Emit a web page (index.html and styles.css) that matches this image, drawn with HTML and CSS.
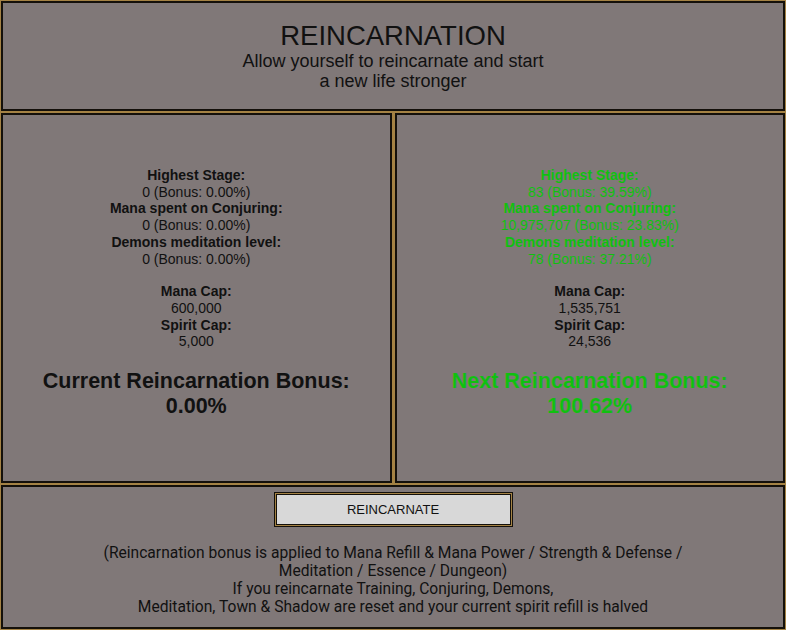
FILE: index.html
```html
<!DOCTYPE html>
<html>
<head>
<meta charset="utf-8">
<link rel="stylesheet" href="styles.css">
</head>
<body>
<div class="page">
  <section class="panel header">
    <h1 class="title">REINCARNATION</h1>
    <p class="subtitle">Allow yourself to reincarnate and start<br>a new life stronger</p>
  </section>
  <div class="row">
    <section class="panel col">
      <div class="stats">
        <div class="label">Highest Stage:</div>
        <div class="value">0 (Bonus: 0.00%)</div>
        <div class="label">Mana spent on Conjuring:</div>
        <div class="value">0 (Bonus: 0.00%)</div>
        <div class="label">Demons meditation level:</div>
        <div class="value">0 (Bonus: 0.00%)</div>
      </div>
      <div class="stats caps">
        <div class="label">Mana Cap:</div>
        <div class="value">600,000</div>
        <div class="label">Spirit Cap:</div>
        <div class="value">5,000</div>
      </div>
      <div class="bonus">Current Reincarnation Bonus:<br>0.00%</div>
    </section>
    <section class="panel col">
      <div class="stats green">
        <div class="label">Highest Stage:</div>
        <div class="value">83 (Bonus: 39.59%)</div>
        <div class="label">Mana spent on Conjuring:</div>
        <div class="value">10,975,707 (Bonus: 23.83%)</div>
        <div class="label">Demons meditation level:</div>
        <div class="value">78 (Bonus: 37.21%)</div>
      </div>
      <div class="stats caps">
        <div class="label">Mana Cap:</div>
        <div class="value">1,535,751</div>
        <div class="label">Spirit Cap:</div>
        <div class="value">24,536</div>
      </div>
      <div class="bonus green">Next Reincarnation Bonus:<br>100.62%</div>
    </section>
  </div>
  <section class="panel footer">
    <button class="btn">REINCARNATE</button>
    <p class="note">(Reincarnation bonus is applied to Mana Refill &amp; Mana Power / Strength &amp; Defense /<br>Meditation / Essence / Dungeon)<br>If you reincarnate Training, Conjuring, Demons,<br>Meditation, Town &amp; Shadow are reset and your current spirit refill is halved</p>
  </section>
</div>
</body>
</html>
```
FILE: styles.css
```css
html, body {
  margin: 0;
  padding: 0;
}
body {
  width: 786px;
  height: 630px;
  overflow: hidden;
  background: #a48244;
  font-family: "Liberation Sans", Arial, sans-serif;
  color: #111;
}
.page {
  box-sizing: border-box;
  height: 630px;
  padding: 1px;
  display: flex;
  flex-direction: column;
  gap: 2px;
}
.panel {
  box-sizing: border-box;
  background: #807878;
  border: 2px solid #14100a;
}
.header {
  height: 110px;
  text-align: center;
  padding-top: 17px;
}
.title {
  margin: 0;
  font-size: 27.5px;
  font-weight: normal;
  line-height: 31px;
}
.subtitle {
  margin: 0;
  font-size: 18px;
  line-height: 20px;
}
.row {
  display: flex;
  gap: 3px;
  height: 370px;
}
.col {
  flex: 1;
  text-align: center;
  padding-top: 52px;
}
.stats {
  font-size: 14px;
  line-height: 16.7px;
}
.label {
  font-weight: bold;
}
.caps {
  margin-top: 16px;
  color: #111;
}
.green {
  color: #10c010;
}
.bonus {
  margin-top: 19px;
  font-size: 21.5px;
  font-weight: bold;
  line-height: 25px;
}
.footer {
  flex: 1;
  text-align: center;
  padding-top: 5px;
}
.btn {
  display: block;
  margin: 0 auto;
  width: 239px;
  height: 35px;
  background: #d8d8d8;
  border: 2px solid #a48244;
  outline: 1px solid #14100a;
  outline-offset: -1px;
  box-shadow: inset 0 0 0 1px #14100a;
  font-family: "Liberation Sans", Arial, sans-serif;
  font-size: 13px;
  color: #111;
  padding: 0;
}
.note {
  margin: 17px 0 0;
  font-family: Roboto, "Liberation Sans", sans-serif;
  font-size: 15.6px;
  line-height: 18px;
  color: #111;
}
```
